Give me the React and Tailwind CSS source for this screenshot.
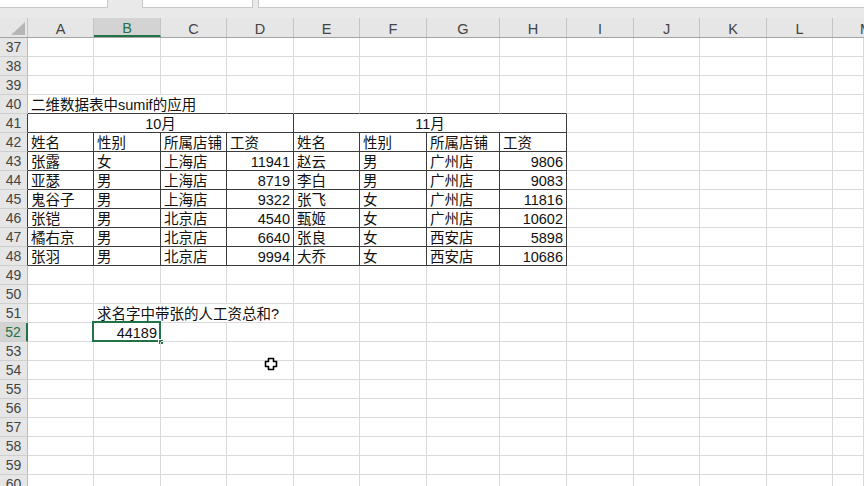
import React from "react";

const FONT = { fontFamily: '"Liberation Sans", "Noto Sans CJK SC", sans-serif' };

const W = {
  31: "w-[31px]",
  66: "w-[66px]",
  67: "w-[67px]",
  73: "w-[73px]",
  199: "w-[199px]",
  200: "w-[200px]",
  266: "w-[266px]",
  273: "w-[273px]",
};

const COLS = [
  ["A", 66], ["B", 67], ["C", 66], ["D", 67], ["E", 66], ["F", 67], ["G", 73],
  ["H", 67], ["I", 67], ["J", 66], ["K", 67], ["L", 66], ["M", 0],
];

const GR = "border-r border-r-[#dadada]";
const GB = "border-b border-b-[#dadada]";
const DR = "border-r border-r-[#3c3c3c]";
const DB = "border-b border-b-[#3c3c3c]";

const plain = (from, to) =>
  COLS.slice(from, to).map(([k, w]) => ({ w, r: GR, b: GB }));

const t1 = [
  ["张露", "女", "上海店", "11941", "赵云", "男", "广州店", "9806"],
  ["亚瑟", "男", "上海店", "8719", "李白", "男", "广州店", "9083"],
  ["鬼谷子", "男", "上海店", "9322", "张飞", "女", "广州店", "11816"],
  ["张铠", "男", "北京店", "4540", "甄姬", "女", "广州店", "10602"],
  ["橘右京", "男", "北京店", "6640", "张良", "女", "西安店", "5898"],
  ["张羽", "男", "北京店", "9994", "大乔", "女", "西安店", "10686"],
];

function buildRow(n) {
  if (n === 40) {
    return {
      dark: false,
      cells: [
        { w: 199, r: GR, b: DB, text: "二维数据表中sumif的应用", align: "l" },
        { w: 67, r: GR, b: DB },
        { w: 66, r: GR, b: DB },
        { w: 67, r: GR, b: DB },
        { w: 73, r: GR, b: DB },
        { w: 67, r: GR, b: DB },
        ...plain(8, 13),
      ],
    };
  }
  if (n === 41) {
    return {
      dark: true,
      cells: [
        { w: 266, r: DR, b: DB, text: "10月", align: "c" },
        { w: 273, r: DR, b: DB, text: "11月", align: "c" },
        ...plain(8, 13),
      ],
    };
  }
  if (n >= 42 && n <= 48) {
    const vals =
      n === 42
        ? ["姓名", "性别", "所属店铺", "工资", "姓名", "性别", "所属店铺", "工资"]
        : t1[n - 43];
    return {
      dark: true,
      cells: [
        ...COLS.slice(0, 8).map(([k, w], i) => ({
          w,
          r: DR,
          b: DB,
          text: vals[i],
          align: n > 42 && (i === 3 || i === 7) ? "r" : "l",
        })),
        ...plain(8, 13),
      ],
    };
  }
  if (n === 51) {
    return {
      dark: false,
      cells: [
        { w: 66, r: GR, b: GB },
        { w: 200, r: GR, b: GB, text: "求名字中带张的人工资总和?", align: "l" },
        ...plain(4, 13),
      ],
    };
  }
  if (n === 52) {
    return {
      dark: false,
      sel: true,
      cells: [
        { w: 66, r: GR, b: GB },
        { w: 67, r: GR, b: GB, text: "44189", align: "r", selected: true },
        ...plain(2, 13),
      ],
    };
  }
  return { dark: false, cells: plain(0, 13) };
}

function Cell({ c }) {
  const width = c.w ? W[c.w] : "flex-1";
  const al =
    c.align === "r" ? "justify-end pr-[3px]" : c.align === "c" ? "justify-center" : "justify-start pl-[3px]";
  return (
    <div
      className={`relative box-border h-full shrink-0 ${width} ${c.r} ${c.b} flex items-end ${al} whitespace-nowrap text-[14.5px] leading-[15px] text-[#111]`}
    >
      {c.text ? <span>{c.text}</span> : null}
      {c.selected ? (
        <>
          <div className="pointer-events-none absolute -left-[2px] -top-[2px] -right-[1px] -bottom-[1px] border-2 border-[#217346]" />
          <div className="absolute -bottom-[4px] -right-[4px] h-[6px] w-[6px] border border-white bg-[#217346]" />
        </>
      ) : null}
    </div>
  );
}

function Row({ n }) {
  const r = buildRow(n);
  return (
    <div className="flex h-[19px] shrink-0">
      <div
        className={`box-border flex h-full w-[28px] shrink-0 items-center justify-center border-b border-b-[#cfcfcf] pt-[1px] text-[14px] ${
          r.sel
            ? "border-r-2 border-r-[#217346] bg-[#d3d3d3] text-[#217346]"
            : r.dark
            ? "border-r border-r-[#3c3c3c] bg-[#e6e6e6] text-[#444]"
            : "border-r border-r-[#bdbdbd] bg-[#e6e6e6] text-[#444]"
        }`}
      >
        {n}
      </div>
      {r.cells.map((c, i) => (
        <Cell key={i} c={c} />
      ))}
    </div>
  );
}

export default function App() {
  const rows = [];
  for (let n = 37; n <= 60; n++) rows.push(n);
  return (
    <div className="relative h-[486px] w-[864px] overflow-hidden bg-white" style={FONT}>
      {/* formula bar remnant */}
      <div className="flex h-[8px] bg-[#e9e9e9]">
        <div className="box-border h-full w-[108px] border-b border-r border-[#c8c8c8] bg-white" />
        <div className="w-[34px]" />
        <div className="box-border h-full w-[111px] border-b border-l border-r border-[#c8c8c8] bg-white" />
        <div className="w-[5px]" />
        <div className="box-border h-full flex-1 border-b border-l border-[#c8c8c8] bg-white" />
      </div>
      <div className="h-[10px] bg-[#e9e9e9]" />
      {/* column headers */}
      <div className="flex h-[20px] border-b border-b-[#a3a3a3] bg-[#e6e6e6] text-[14.5px] text-[#444]">
        <div className="relative box-border h-full w-[28px] shrink-0 border-r border-r-[#c4c4c4]">
          <svg className="absolute bottom-[2px] right-[2px]" width="14" height="13" viewBox="0 0 14 13">
            <polygon points="14,0 14,13 0,13" fill="#b6b6b6" />
          </svg>
        </div>
        {COLS.map(([k, w]) => (
          <div
            key={k}
            className={`box-border flex h-full shrink-0 items-center justify-center pt-[4px] ${w ? W[w] : "flex-1"} ${
              k === "B"
                ? "border-b-2 border-b-[#217346] border-r border-r-[#c4c4c4] bg-[#d3d3d3] text-[#217346]"
                : "border-r border-r-[#c4c4c4]"
            } ${k === "M" ? "justify-start pl-[27px]" : ""}`}
          >
            {k}
          </div>
        ))}
      </div>
      {/* grid */}
      <div className="flex flex-col">
        {rows.map((n) => (
          <Row key={n} n={n} />
        ))}
      </div>
      {/* mouse cursor */}
      <svg className="absolute left-[264px] top-[357px]" width="14" height="14" viewBox="0 0 14 14">
        <path
          d="M4.5 1.5h5v3h3v5h-3v3h-5v-3h-3v-5h3z"
          fill="#fff"
          stroke="#000"
          strokeWidth="1.6"
          strokeLinejoin="round"
        />
      </svg>
    </div>
  );
}
